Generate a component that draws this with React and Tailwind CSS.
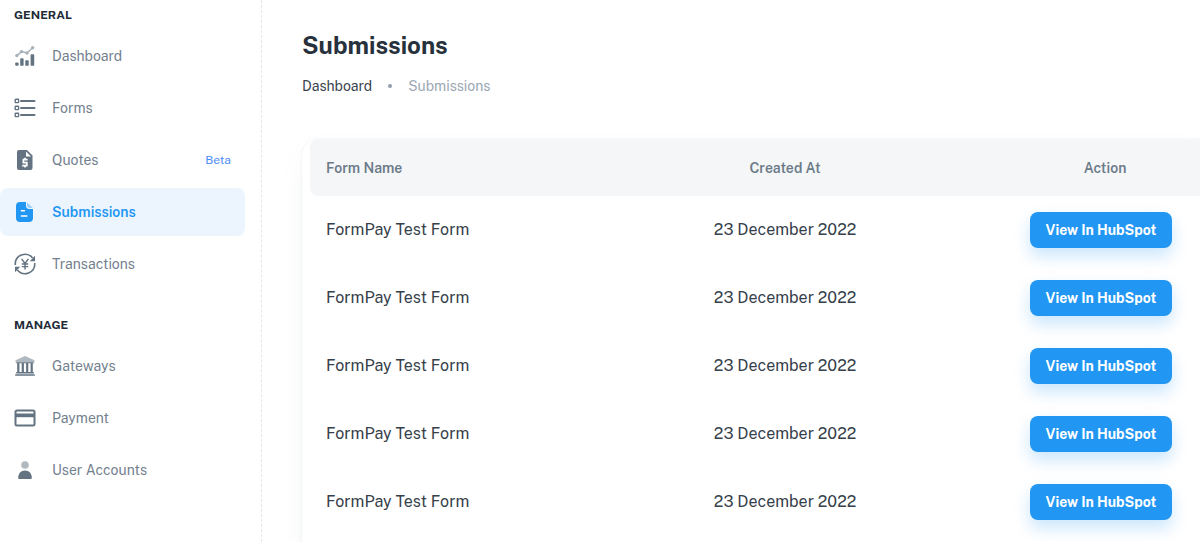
import clsx from "clsx";

const ChartIcon = () => (
  <svg viewBox="0 0 22 22" className="size-[22px] shrink-0" fill="currentColor">
    <g opacity="0.55">
      <path d="M2.8 10.6 7.6 6.6 13 8l5.700-5.200" fill="none" stroke="currentColor" strokeWidth="1.5" />
      <circle cx="2.800" cy="10.600" r="1.700" />
      <circle cx="7.600" cy="6.600" r="1.700" />
      <circle cx="13" cy="8" r="1.700" />
      <circle cx="18.700" cy="2.800" r="1.700" />
    </g>
    <rect x="1.200" y="17.400" width="3.400" height="3.400" rx="1.200" />
    <rect x="6.200" y="13.200" width="3.400" height="7.600" rx="0.900" />
    <rect x="11.300" y="15.300" width="3.400" height="5.500" rx="0.900" />
    <rect x="16.600" y="9.200" width="3.600" height="11.600" rx="0.900" />
  </svg>
);

const ListIcon = () => (
  <svg viewBox="0 0 22 22" className="size-[22px] shrink-0" fill="none" stroke="currentColor">
    <path d="M7 4h13.5M7 11h13.5M7 18h13.5" strokeWidth="2" strokeLinecap="round" />
    <rect x="1.2" y="2.2" width="3.4" height="3.4" rx="0.6" strokeWidth="1.4" />
    <rect x="1.2" y="9.2" width="3.4" height="3.4" rx="0.6" strokeWidth="1.4" />
    <rect x="1.2" y="16.2" width="3.4" height="3.4" rx="0.6" strokeWidth="1.4" />
  </svg>
);

const QuoteIcon = () => (
  <svg viewBox="0 0 22 22" className="size-[22px] shrink-0">
    <path d="M5 1h8l5.500 5.500V19a2 2 0 0 1-2 2H5a2 2 0 0 1-2-2V3a2 2 0 0 1 2-2Z" fill="currentColor" />
    <path d="M12 2.600v5h5Z" fill="#fff" />
    <path
      d="M13.600 10.600H9.400v3h3.400v3H8.200M11 8.800v1.800M11 16.600v1.800"
      fill="none"
      stroke="#fff"
      strokeWidth="1.7"
    />
  </svg>
);

const FileIcon = () => (
  <svg viewBox="0 0 22 22" className="size-[22px] shrink-0">
    <path
      d="M6 1h6v3.500c0 2.400 1.200 3.600 3.600 3.600h3.400V17a4 4 0 0 1-4 4H6a4 4 0 0 1-4-4V5a4 4 0 0 1 4-4Z"
      fill="currentColor"
    />
    <path d="M13 1.200 18.800 7h-3.100C13.900 7 13 6.100 13 4.300Z" fill="currentColor" opacity="0.4" />
    <path d="M7.400 9.800h3M7.400 15h5.400" stroke="#fff" strokeWidth="1.6" strokeLinecap="round" />
  </svg>
);

const ExchangeIcon = () => (
  <svg viewBox="0 0 22 22" className="size-[22px] shrink-0" fill="none" stroke="currentColor">
    <path d="M1.300 12A9.800 9.800 0 0 1 18.600 4.900" strokeWidth="1.600" />
    <path d="M20.700 10A9.800 9.800 0 0 1 3.400 17.100" strokeWidth="1.600" />
    <path d="M21 2.800v5.400h-5.200ZM1 19.200v-5.400h5.200Z" fill="currentColor" stroke="none" />
    <path d="m7.600 5.800 3.400 4.700 3.400-4.700M11 10.500v6M7.800 11h6.400M7.800 13.600h6.400" strokeWidth="1.4" />
  </svg>
);

const BankIcon = () => (
  <svg viewBox="0 0 22 22" className="size-[22px] shrink-0" fill="currentColor">
    <path d="M11 1 20.5 5.200v2H1.500v-2Z" opacity="0.5" />
    <path d="M3.200 8h2.200v9H3.200ZM7.700 8h2.200v9H7.700ZM12.100 8h2.200v9h-2.200ZM16.600 8h2.200v9h-2.200Z" />
    <path d="M2.200 7.200h17.600v1H2.200ZM2.200 17h17.600v1.600H2.200ZM1.200 19.200h19.600v1.600H1.200Z" />
  </svg>
);

const CardIcon = () => (
  <svg viewBox="0 0 22 22" className="size-[22px] shrink-0">
    <rect
      x="1.5"
      y="3.500"
      width="19"
      height="15"
      rx="1.500"
      fill="none"
      stroke="currentColor"
      strokeWidth="2"
    />
    <path d="M1.500 6.500h19v3.700h-19Z" fill="currentColor" />
  </svg>
);

const UserIcon = () => (
  <svg viewBox="0 0 22 22" className="size-[22px] shrink-0" fill="currentColor">
    <circle cx="11" cy="6" r="3.8" opacity="0.5" />
    <path d="M4.200 19c0-4.400 2.600-7.400 6.800-7.400s6.800 3 6.800 7.400c0 .6-.4.9-1 .9H5.200c-.6 0-1-.3-1-.9Z" />
  </svg>
);

const generalItems = [
  { label: "Dashboard", icon: ChartIcon },
  { label: "Forms", icon: ListIcon },
  { label: "Quotes", icon: QuoteIcon, badge: "Beta" },
  { label: "Submissions", icon: FileIcon, active: true },
  { label: "Transactions", icon: ExchangeIcon },
];

const manageItems = [
  { label: "Gateways", icon: BankIcon },
  { label: "Payment", icon: CardIcon },
  { label: "User Accounts", icon: UserIcon },
];

const submissions = [1, 2, 3, 4, 5].map((id) => ({
  id,
  name: "FormPay Test Form",
  createdAt: "23 December 2022",
}));

function NavSection({ title, items }) {
  return (
    <section>
      <h2 className="px-3.5 text-xs leading-[18px] font-bold text-[#212b36]">{title}</h2>
      <ul className="mt-2 flex flex-col gap-1">
        {items.map(({ label, icon: Icon, badge, active }) => (
          <li key={label}>
            <a
              href="#"
              className={clsx(
                "flex h-12 items-center gap-4 rounded-lg px-3.5 text-sm",
                active ? "bg-[#ecf5fe] font-semibold text-[#2196f3]" : "text-[#637381]"
              )}
            >
              <Icon />
              <span className={clsx(!active && "text-[#73818e]")}>{label}</span>
              {badge && <span className="ml-auto text-xs text-[#4a8bf7]">{badge}</span>}
            </a>
          </li>
        ))}
      </ul>
    </section>
  );
}

export default function App() {
  return (
    <div className="flex h-screen overflow-hidden bg-white font-['Public_Sans','Inter',sans-serif]">
      <aside className="w-[262px] shrink-0 border-r border-dashed border-[#e3e7eb] pt-1.5 pr-4">
        <nav className="flex flex-col gap-7">
          <NavSection title="GENERAL" items={generalItems} />
          <NavSection title="MANAGE" items={manageItems} />
        </nav>
      </aside>

      <main className="min-w-0 flex-1 pt-7 pl-10">
        <h1 className="text-2xl leading-[34px] font-bold text-[#27313c]">Submissions</h1>
        <div className="mt-3.5 flex items-center gap-4 text-sm leading-5">
          <a href="#" className="text-[#3a444e]">
            Dashboard
          </a>
          <span className="size-1 rounded-full bg-[#919eab]" />
          <span className="text-[#9ca7b3]">Submissions</span>
        </div>

        <div className="mt-[43px] h-screen rounded-l-2xl pl-2 shadow-[0_0_2px_0_rgba(145,158,171,0.2),0_12px_24px_-4px_rgba(145,158,171,0.12)]">
          <table className="w-full table-fixed border-separate border-spacing-0">
            <thead>
              <tr className="h-[57px] text-sm text-[#6c7b88]">
                <th className="w-[29%] rounded-l-lg bg-[#f4f6f8] px-4 text-left font-semibold">
                  Form Name
                </th>
                <th className="bg-[#f4f6f8] text-center font-semibold">Created At</th>
                <th className="w-[198px] bg-[#f4f6f8] pl-2 text-center font-semibold">Action</th>
              </tr>
            </thead>
            <tbody>
              {submissions.map((s) => (
                <tr key={s.id} className="h-[68px] text-base text-[#36404a]">
                  <td className="px-4">{s.name}</td>
                  <td className="text-center">{s.createdAt}</td>
                  <td className="text-center">
                    <button className="h-9 rounded-lg bg-[#2196f3] px-4 text-sm font-bold text-white shadow-[0_8px_16px_0_rgba(33,150,243,0.24)]">
                      View In HubSpot
                    </button>
                  </td>
                </tr>
              ))}
            </tbody>
          </table>
        </div>
      </main>
    </div>
  );
}
